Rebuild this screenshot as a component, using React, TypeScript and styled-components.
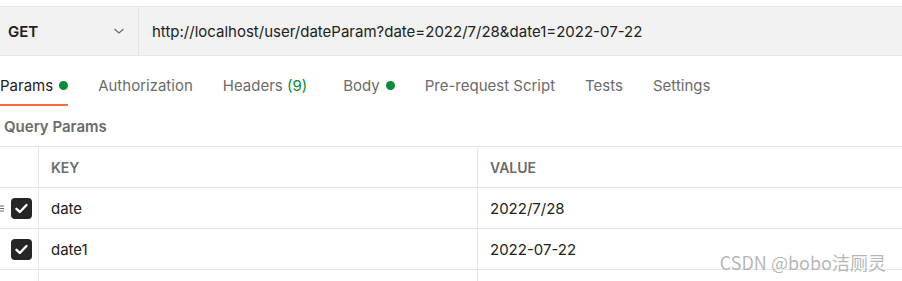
import { createGlobalStyle } from "styled-components";
import styled from "styled-components";

const GlobalStyle = createGlobalStyle`
  html, body {
    margin: 0;
    padding: 0;
    background: #fff;
    font-family: Inter, "Noto Sans", sans-serif;
    overflow: hidden;
  }
`

const StyledPage = styled.div`
  position: relative;
  width: 902px;
  height: 281px;
  padding-top: 6px;
  box-sizing: border-box;
  overflow: hidden;
`

const StyledUrlBar = styled.div`
  display: flex;
  height: 50px;
  background: #f2f2f2;
  border-top: 1px solid #e6e6e6;
  border-bottom: 1px solid #e6e6e6;
  box-sizing: border-box;
`

const StyledMethod = styled.div`
  display: flex;
  align-items: center;
  justify-content: space-between;
  width: 139px;
  padding: 0 13px 0 8px;
  box-sizing: border-box;
  border-right: 1px solid #e3e3e3;
  font-size: 15px;
  font-weight: 600;
  color: #212121;
`

const StyledUrl = styled.div`
  display: flex;
  align-items: center;
  padding-left: 13px;
  font-size: 15px;
  color: #212121;
`

const StyledTabs = styled.div`
  display: flex;
  gap: 30px;
  height: 50px;
`

const StyledTab = styled.div<{ $active?: boolean; $extra?: number }>`
  display: flex;
  align-items: center;
  gap: 6px;
  padding-top: 10px;
  margin-right: ${p => p.$extra || 0}px;
  font-size: 15px;
  color: ${p => (p.$active ? "#212121" : "#6b6b6b")};
  border-bottom: 2px solid ${p => (p.$active ? "#ff6c37" : "transparent")};
  box-sizing: border-box;
`

const StyledCount = styled.span`
  color: #0a8a3b;
`

const StyledDot = styled.span`
  width: 9px;
  height: 9px;
  border-radius: 50%;
  background: #0b8a3c;
`

const StyledSection = styled.div`
  padding: 11px 0 0 4px;
  height: 40px;
  box-sizing: border-box;
  font-size: 15px;
  font-weight: 600;
  color: #6b6b6b;
`

const StyledTable = styled.div`
  display: grid;
  grid-template-columns: 39px 439px 1fr;
  grid-auto-rows: 41px;
  border-top: 1px solid #e6e6e6;
`

const StyledCell = styled.div<{ $head?: boolean }>`
  display: flex;
  align-items: center;
  padding-left: 12px;
  border-right: 1px solid #e6e6e6;
  border-bottom: 1px solid #e6e6e6;
  font-size: ${p => (p.$head ? "14px" : "15px")};
  font-weight: ${p => (p.$head ? 600 : 400)};
  color: ${p => (p.$head ? "#6b6b6b" : "#212121")};
  &:nth-child(3n) {
    border-right: none;
  }
`

const StyledCheckCell = styled.div`
  position: relative;
  display: flex;
  align-items: center;
  justify-content: flex-end;
  padding-right: 6px;
  border-right: 1px solid #e6e6e6;
  border-bottom: 1px solid #e6e6e6;
`

const StyledCheckbox = styled.div`
  display: flex;
  align-items: center;
  justify-content: center;
  width: 21px;
  height: 21px;
  border-radius: 4px;
  background: #262626;
`

const StyledHandle = styled.svg`
  position: absolute;
  left: -3px;
  top: 17px;
`

const StyledWatermark = styled.div`
  position: absolute;
  right: 16px;
  bottom: 6px;
  font-family: "Noto Sans CJK SC", sans-serif;
  font-size: 18px;
  color: rgba(150, 150, 150, 0.7);
`

const tabs = [
  { label: "Params", active: true, dot: true },
  { label: "Authorization" },
  { label: "Headers", count: "(9)", extra: 6 },
  { label: "Body", dot: true },
  { label: "Pre-request Script" },
  { label: "Tests" },
  { label: "Settings" },
]

const rows = [
  { key: "date", value: "2022/7/28", handle: true },
  { key: "date1", value: "2022-07-22" },
]

function Check() {
  return (
    <StyledCheckbox>
      <svg width="13" height="11" viewBox="0 0 13 11">
        <path d="M1.5 5.8 L4.8 9 L11.5 2" fill="none" stroke="#fff" strokeWidth="2.4" strokeLinecap="round" strokeLinejoin="round" />
      </svg>
    </StyledCheckbox>
  )
}

export default function App() {
  return (
    <StyledPage>
      <GlobalStyle />
      <StyledUrlBar>
        <StyledMethod>
          <span>GET</span>
          <svg width="12" height="8" viewBox="0 0 12 8">
            <path d="M1.5 2 L6 6 L10.5 2" fill="none" stroke="#6b6b6b" strokeWidth="1.2" />
          </svg>
        </StyledMethod>
        <StyledUrl>http://localhost/user/dateParam?date=2022/7/28&amp;date1=2022-07-22</StyledUrl>
      </StyledUrlBar>
      <StyledTabs>
        {tabs.map(t => (
          <StyledTab key={t.label} $active={t.active} $extra={t.extra}>
            <span>
              {t.label}
              {t.count && <StyledCount> {t.count}</StyledCount>}
            </span>
            {t.dot && <StyledDot />}
          </StyledTab>
        ))}
      </StyledTabs>
      <StyledSection>Query Params</StyledSection>
      <StyledTable>
        <StyledCheckCell />
        <StyledCell $head>KEY</StyledCell>
        <StyledCell $head>VALUE</StyledCell>
        {rows.map(r => (
          <>
            <StyledCheckCell key={r.key + "c"}>
              {r.handle && (
                <StyledHandle width="7" height="7" viewBox="0 0 7 7">
                  <path d="M0 1h7M0 3.5h7M0 6h7" stroke="#6b6b6b" strokeWidth="1" />
                </StyledHandle>
              )}
              <Check />
            </StyledCheckCell>
            <StyledCell key={r.key + "k"}>{r.key}</StyledCell>
            <StyledCell key={r.key + "v"}>{r.value}</StyledCell>
          </>
        ))}
        <StyledCheckCell />
        <StyledCell />
        <StyledCell />
      </StyledTable>
      <StyledWatermark>CSDN @bobo洁厕灵</StyledWatermark>
    </StyledPage>
  )
}
